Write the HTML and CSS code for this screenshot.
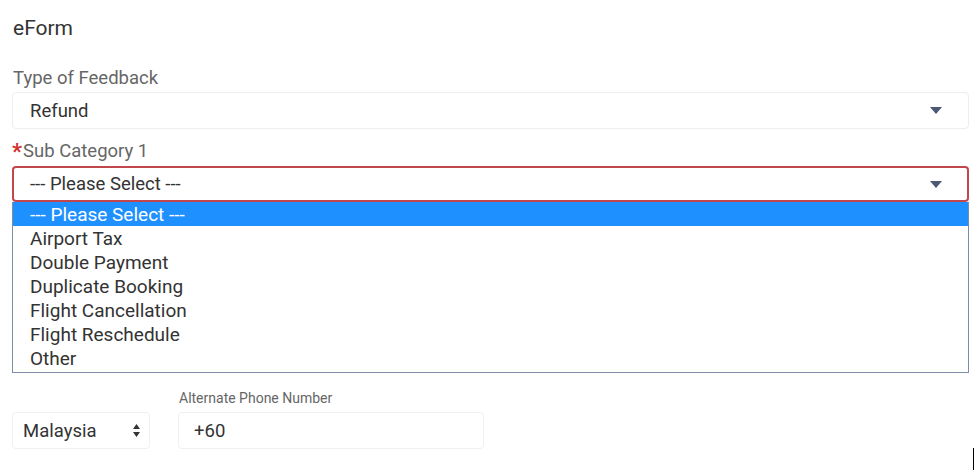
FILE: index.html
```html
<!DOCTYPE html>
<html>
<head>
<meta charset="utf-8">
<link rel="stylesheet" href="styles.css">
</head>
<body>
<div class="page">
  <div class="title">eForm</div>

  <div class="label label-first">Type of Feedback</div>
  <div class="select">
    <span class="select-value">Refund</span>
    <svg class="caret" width="12" height="7" viewBox="0 0 12 7"><path d="M0 0 H12 L6 7 Z" fill="#4b5874"/></svg>
  </div>

  <div class="label label-req"><span class="star">*</span>Sub Category 1</div>
  <div class="select select-error">
    <span class="select-value">--- Please Select ---</span>
    <svg class="caret" width="12" height="7" viewBox="0 0 12 7"><path d="M0 0 H12 L6 7 Z" fill="#4b5874"/></svg>
  </div>
  <ul class="options">
    <li class="opt opt-active">--- Please Select ---</li>
    <li class="opt">Airport Tax</li>
    <li class="opt">Double Payment</li>
    <li class="opt">Duplicate Booking</li>
    <li class="opt">Flight Cancellation</li>
    <li class="opt">Flight Reschedule</li>
    <li class="opt">Other</li>
  </ul>

  <div class="phone-row">
    <div class="phone-col">
      <div class="small-label">&nbsp;</div>
      <div class="country">
        <span>Malaysia</span>
        <svg class="spin" width="7" height="13" viewBox="0 0 7 13"><path d="M3.5 0 L7 5 H0 Z M0 8 H7 L3.5 13 Z" fill="#333"/></svg>
      </div>
    </div>
    <div class="phone-col">
      <div class="small-label">Alternate Phone Number</div>
      <div class="phone-input">+60</div>
    </div>
  </div>
</div>
<div class="text-cursor"></div>
</body>
</html>
```

FILE: styles.css
```css
html, body {
  margin: 0;
  padding: 0;
  background: #ffffff;
}
body {
  font-family: Roboto, "Liberation Sans", Arial, sans-serif;
  color: #333;
  width: 976px;
  height: 470px;
  overflow: hidden;
  position: relative;
}
.page {
  padding: 16px 7px 0 12px;
}
.title {
  font-size: 21px;
  line-height: 24px;
  color: #333;
  padding-left: 1px;
}
.label {
  font-size: 18.5px;
  line-height: 20px;
  height: 20px;
  color: #666;
  padding-left: 1px;
}
.label-first {
  margin-top: 28px;
}
.label-req {
  margin-top: 12px;
  padding-left: 0;
}
.star {
  color: #d0312d;
  font-size: 22px;
  font-weight: bold;
  margin-right: 1px;
  vertical-align: -2px;
  line-height: 20px;
}
.select {
  margin-top: 4px;
  height: 35px;
  border: 1px solid #eeeeee;
  border-radius: 4px;
  display: flex;
  align-items: center;
  justify-content: space-between;
  padding: 0 26px 0 17px;
  font-size: 18.5px;
  color: #333;
}
.select-error {
  margin-top: 5px;
  height: 32px;
  border: 2px solid #c2474c;
  padding: 0 25px 0 16px;
}
.caret {
  display: block;
}
.options {
  list-style: none;
  margin: 0;
  padding: 0 0 2px 0;
  border: 1px solid #7d8fa8;
  border-top: none;
}
.opt {
  height: 24px;
  line-height: 25px;
  font-size: 19px;
  padding-left: 17px;
  color: #333;
}
.opt-active {
  background: #1e90ff;
  color: #fff;
}
.phone-row {
  display: flex;
  gap: 28px;
  margin-top: 15px;
}
.small-label {
  font-size: 14px;
  line-height: 20px;
  color: #666;
  margin-bottom: 4px;
  padding-left: 1px;
}
.country {
  height: 35px;
  border: 1px solid #f0f0f0;
  border-radius: 4px;
  display: flex;
  align-items: center;
  justify-content: space-between;
  padding: 0 9px 0 10px;
  font-size: 18.5px;
  color: #333;
  box-sizing: content-box;
  width: 117px;
}
.phone-input {
  width: 289px;
  height: 35px;
  border: 1px solid #f0f0f0;
  border-radius: 4px;
  display: flex;
  align-items: center;
  padding-left: 15px;
  font-size: 18.5px;
  color: #333;
}
.text-cursor {
  position: absolute;
  left: 973px;
  top: 448px;
  width: 1px;
  height: 22px;
  background: #000;
}
```
